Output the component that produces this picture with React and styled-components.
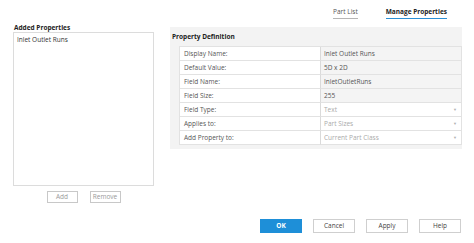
import React from "react";
import styled, { createGlobalStyle } from "styled-components";

const GlobalStyle = createGlobalStyle`
  html, body {
    margin: 0;
    padding: 0;
    background: #ffffff;
  }
  body {
    font-family: "Open Sans", "Noto Sans", sans-serif;
    color: #333333;
  }
`;

const Page = styled.div`
  width: 474px;
  height: 243px;
  display: flex;
  flex-direction: column;
  overflow: hidden;
`;

const Tabs = styled.div`
  display: flex;
  justify-content: flex-end;
  gap: 28px;
  padding: 7px 27px 0 0;
  height: 15px;
`;

const Tab = styled.div`
  font-size: 6.5px;
  line-height: 10px;
  height: 11px;
  font-weight: ${(p) => (p.$active ? 700 : 400)};
  color: ${(p) => (p.$active ? "#222" : "#555")};
  border-bottom: 1px solid ${(p) => (p.$active ? "#2a8fd6" : "#b5b5b5")};
`;

const Main = styled.div`
  display: flex;
  gap: 16px;
  padding: 1px 12px 0 13px;
  height: 184px;
`;

const LeftCol = styled.div`
  width: 141px;
  display: flex;
  flex-direction: column;
`;

const SectionTitle = styled.div`
  font-size: 6.5px;
  font-weight: 700;
  line-height: 9px;
  padding-left: 1px;
  color: #222;
`;

const ListBox = styled.div`
  height: 154px;
  border: 1px solid #dcdcdc;
  box-sizing: border-box;
  padding: 2px 3px;
  font-size: 6.5px;
  line-height: 9px;
`;

const SmallButtons = styled.div`
  display: flex;
  justify-content: center;
  gap: 12px;
  margin-top: 5px;
`;

const SmallButton = styled.div`
  width: 31px;
  height: 12px;
  box-sizing: border-box;
  border: 1px solid #c8c8c8;
  font-size: 6.5px;
  line-height: 10px;
  text-align: center;
  color: #999;
`;

const Panel = styled.div`
  flex: 1;
  margin-top: 4px;
  height: 122px;
  background: #f3f3f3;
  align-self: flex-start;
`;

const PanelHeader = styled.div`
  height: 19px;
  font-size: 6.5px;
  font-weight: 700;
  line-height: 20px;
  padding-left: 2px;
  color: #222;
`;

const Table = styled.div`
  margin-left: 9px;
  display: grid;
  grid-template-columns: 141px 1fr;
  border-top: 1px solid #e2e2e2;
`;

const Label = styled.div`
  height: 13px;
  background: #ffffff;
  border-bottom: 1px solid #e2e2e2;
  border-left: 1px solid #e2e2e2;
  font-size: 6.5px;
  line-height: 13px;
  padding-left: 4px;
  color: #555;
`;

const Value = styled.div`
  height: 13px;
  border-bottom: 1px solid #e2e2e2;
  border-left: 1px solid #dadada;
  border-right: 1px solid #e2e2e2;
  background: ${(p) => (p.$select ? "#ffffff" : "#f4f4f4")};
  color: ${(p) => (p.$select ? "#aaaaaa" : "#555")};
  font-size: 6.5px;
  line-height: 13px;
  padding: 0 4px 0 3px;
  display: flex;
  justify-content: space-between;
  align-items: center;
`;

const Caret = styled.span`
  font-size: 4px;
  color: #b0b0b0;
`;

const Footer = styled.div`
  display: flex;
  justify-content: flex-end;
  gap: 11px;
  padding: 12px 13px 0 0;
`;

const Button = styled.div`
  width: 42px;
  height: 14px;
  box-sizing: border-box;
  border: 1px solid ${(p) => (p.$primary ? "#1e8fd8" : "#cfcfcf")};
  background: ${(p) => (p.$primary ? "#1e8fd8" : "#ffffff")};
  color: ${(p) => (p.$primary ? "#ffffff" : "#444")};
  font-size: 6.5px;
  font-weight: ${(p) => (p.$primary ? 700 : 400)};
  line-height: 12px;
  text-align: center;
`;

const rows = [
  { label: "Display Name:", value: "Inlet Outlet Runs" },
  { label: "Default Value:", value: "5D x 2D" },
  { label: "Field Name:", value: "InletOutletRuns" },
  { label: "Field Size:", value: "255" },
  { label: "Field Type:", value: "Text", select: true },
  { label: "Applies to:", value: "Part Sizes", select: true },
  { label: "Add Property to:", value: "Current Part Class", select: true },
];

export default function App() {
  return (
    <Page>
      <GlobalStyle />
      <Tabs>
        <Tab>Part List</Tab>
        <Tab $active>Manage Properties</Tab>
      </Tabs>
      <Main>
        <LeftCol>
          <SectionTitle>Added Properties</SectionTitle>
          <ListBox>Inlet Outlet Runs</ListBox>
          <SmallButtons>
            <SmallButton>Add</SmallButton>
            <SmallButton>Remove</SmallButton>
          </SmallButtons>
        </LeftCol>
        <Panel>
          <PanelHeader>Property Definition</PanelHeader>
          <Table>
            {rows.map((r) => (
              <React.Fragment key={r.label}>
                <Label>{r.label}</Label>
                <Value $select={r.select}>
                  <span>{r.value}</span>
                  {r.select && <Caret>▼</Caret>}
                </Value>
              </React.Fragment>
            ))}
          </Table>
        </Panel>
      </Main>
      <Footer>
        <Button $primary>OK</Button>
        <Button>Cancel</Button>
        <Button>Apply</Button>
        <Button>Help</Button>
      </Footer>
    </Page>
  );
}
